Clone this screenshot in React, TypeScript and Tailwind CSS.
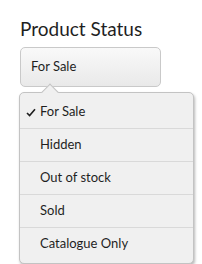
const items = ["For Sale", "Hidden", "Out of stock", "Sold", "Catalogue Only"];

export default function App() {
  const selected = "For Sale";

  return (
    <div className="relative h-[264px] w-[202px] overflow-hidden bg-white font-['Lato','Noto_Sans',sans-serif] text-[#1f1f1f]">
      <div className="px-5 pt-[17px]">
        <h2 className="text-[19px] leading-[24px]">Product Status</h2>
        <div className="mt-[6px] flex h-[40px] w-[141px] items-center rounded-[5px] border border-[#c9c9c9] bg-gradient-to-b from-[#f9f9f9] to-[#e9e9e9] px-[10px] text-[13px]">
          {selected}
        </div>
        <p className="mt-[171px] pl-2 text-[12px] leading-4 text-[#222]">
          Hidden products won't show in the store.
        </p>
      </div>

      <div className="absolute left-[19px] top-[92px] w-[175px] rounded-[5px] border border-[#c3c3c3] bg-[#f0f0f0] pt-[2px] pb-[3px] shadow-[1px_2px_3px_rgba(0,0,0,0.28)]">
        <div className="absolute -top-[7px] left-[24px] h-[12px] w-[12px] rotate-45 border-l border-t border-[#c3c3c3] bg-[#f0f0f0]" />
        {items.map((item, i) => (
          <div
            key={item}
            className={`relative flex h-[33px] items-center pl-[20px] text-[13px] ${i > 0 ? "border-t border-[#d9d9d9]" : ""}`}
          >
            {item === selected && (
              <svg className="absolute left-[6px] top-[13px]" width="10" height="9" viewBox="0 0 10 9">
                <path d="M1 5 L3.6 7.6 L9 1.2" fill="none" stroke="#1f1f1f" strokeWidth="1.6" />
              </svg>
            )}
            {item}
          </div>
        ))}
      </div>
    </div>
  );
}
